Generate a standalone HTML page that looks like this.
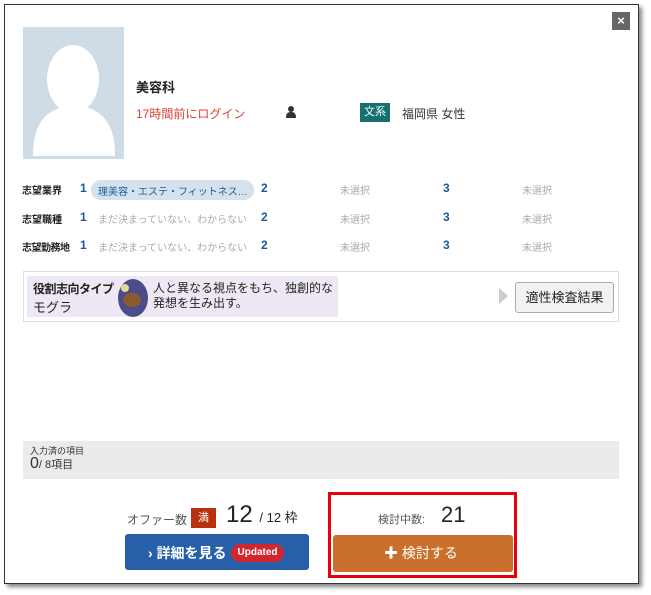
<!DOCTYPE html>
<html><head><meta charset="utf-8"><style>
body{margin:0;width:651px;height:595px;background:#fff;position:relative;font-family:"Liberation Sans","Noto Sans CJK JP",sans-serif;overflow:hidden}
.a{position:absolute;white-space:nowrap}
.frame{left:4px;top:4px;width:633px;height:578px;border:1px solid #333;box-shadow:3px 3px 4px #888;background:#fff}
.lbl{font-size:10px;color:#222;font-weight:bold}
.n{font-size:12px;color:#1a5a9a;font-weight:bold}
.g{font-size:10px;color:#aaa}
</style></head><body>
<div class="a frame"></div>
<div class="a" style="left:612px;top:12px;width:18px;height:18px;background:#666;color:#fff;font-size:13px;font-weight:bold;text-align:center;line-height:18px">×</div>
<div class="a" style="left:23px;top:27px;width:101px;height:132px;background:#cfdce6;overflow:hidden">
<svg width="101" height="132"><ellipse cx="50" cy="52" rx="26" ry="34" fill="#fff"/><path d="M10 129 C10 100 20 85 40 80 L62 80 C82 85 92 100 92 129 Z" fill="#fff"/></svg></div>
<div class="a" style="left:136px;top:77px;font-size:13px;font-weight:bold;color:#222">美容科</div>
<div class="a" style="left:136px;top:105px;font-size:12px;color:#d9402f">17時間前にログイン</div>
<svg class="a" style="left:286px;top:106px" width="10" height="12"><circle cx="5" cy="3" r="3" fill="#333"/><path d="M0 12 C0 7 2 6 5 6 C8 6 10 7 10 12Z" fill="#333"/></svg>
<div class="a" style="left:360px;top:103px;width:30px;height:19px;background:#17706f;color:#fff;font-size:11px;text-align:center;line-height:19px">文系</div>
<div class="a" style="left:402px;top:105px;font-size:12px;color:#333">福岡県 女性</div>

<div class="a lbl" style="left:22px;top:182px">志望業界</div>
<div class="a n" style="left:80px;top:181px">1</div>
<div class="a" style="left:91px;top:180px;width:163px;height:20px;background:#d4e2ee;border-radius:10px"></div>
<div class="a" style="left:98px;top:183px;font-size:10px;color:#1a5a9a">理美容・エステ・フィットネス…</div>
<div class="a n" style="left:261px;top:181px">2</div><div class="a g" style="left:340px;top:182px">未選択</div>
<div class="a n" style="left:443px;top:181px">3</div><div class="a g" style="left:522px;top:182px">未選択</div>

<div class="a lbl" style="left:22px;top:211px">志望職種</div>
<div class="a n" style="left:80px;top:210px">1</div><div class="a g" style="left:98px;top:211px">まだ決まっていない、わからない</div>
<div class="a n" style="left:261px;top:210px">2</div><div class="a g" style="left:340px;top:211px">未選択</div>
<div class="a n" style="left:443px;top:210px">3</div><div class="a g" style="left:522px;top:211px">未選択</div>

<div class="a lbl" style="left:22px;top:239px;letter-spacing:-0.5px">志望勤務地</div>
<div class="a n" style="left:80px;top:238px">1</div><div class="a g" style="left:98px;top:239px">まだ決まっていない、わからない</div>
<div class="a n" style="left:261px;top:238px">2</div><div class="a g" style="left:340px;top:239px">未選択</div>
<div class="a n" style="left:443px;top:238px">3</div><div class="a g" style="left:522px;top:239px">未選択</div>

<div class="a" style="left:23px;top:271px;width:594px;height:49px;border:1px solid #ddd"></div>
<div class="a" style="left:27px;top:276px;width:311px;height:41px;background:#ede8f3"></div>
<div class="a" style="left:33px;top:280px;font-size:12px;font-weight:bold;color:#222;letter-spacing:-0.5px">役割志向タイプ</div>
<div class="a" style="left:33px;top:297px;font-size:13px;color:#222">モグラ</div>
<svg class="a" style="left:115px;top:278px" width="36" height="40"><ellipse cx="18" cy="20" rx="15" ry="19" fill="#4b4c8a"/><ellipse cx="17" cy="22" rx="9" ry="7" fill="#8a5a30"/><circle cx="10" cy="10" r="4" fill="#e8d890"/></svg>
<div class="a" style="left:153px;top:281px;font-size:12px;color:#222;line-height:15px">人と異なる視点をもち、独創的な<br>発想を生み出す。</div>
<svg class="a" style="left:499px;top:288px" width="10" height="16"><path d="M0 0 L9 8 L0 16Z" fill="#ccc"/></svg>
<div class="a" style="left:515px;top:282px;width:97px;height:29px;border:1px solid #aaa;border-radius:3px;background:#f2f2f2;font-size:13px;color:#222;text-align:center;line-height:29px">適性検査結果</div>

<div class="a" style="left:23px;top:441px;width:596px;height:38px;background:#ebebeb"></div>
<div class="a" style="left:30px;top:444px;font-size:9px;color:#333">入力済の項目</div>
<div class="a" style="left:30px;top:455px;font-size:16px;color:#333">0<span style="font-size:11px">/ 8項目</span></div>

<div class="a" style="left:127px;top:511px;font-size:12px;color:#555">オファー数</div>
<div class="a" style="left:191px;top:508px;width:25px;height:20px;background:#b8310c;color:#fff;font-size:11px;text-align:center;line-height:20px">満</div>
<div class="a" style="left:226px;top:501px;font-size:24px;color:#222">12 <span style="font-size:13px">/ 12 枠</span></div>
<div class="a" style="left:125px;top:534px;width:184px;height:36px;background:#2760a8;border-radius:3px"></div>
<div class="a" style="left:148px;top:543px;font-size:14px;color:#fff;font-weight:bold">› 詳細を見る</div>
<div class="a" style="left:231px;top:544px;width:53px;height:18px;background:#d1262e;border-radius:9px;color:#fff;font-size:10px;font-weight:bold;text-align:center;line-height:18px">Updated</div>

<div class="a" style="left:378px;top:511px;font-size:11px;color:#555">検討中数:</div>
<div class="a" style="left:441px;top:502px;font-size:22px;color:#222">21</div>
<div class="a" style="left:333px;top:535px;width:180px;height:37px;background:#c8702c;border-radius:3px"></div>
<div class="a" style="left:384px;top:543px;font-size:14px;color:#fff"><b>✚</b> 検討する</div>
<div class="a" style="left:328px;top:492px;width:183px;height:80px;border:3px solid #e8000e"></div>
</body></html>
